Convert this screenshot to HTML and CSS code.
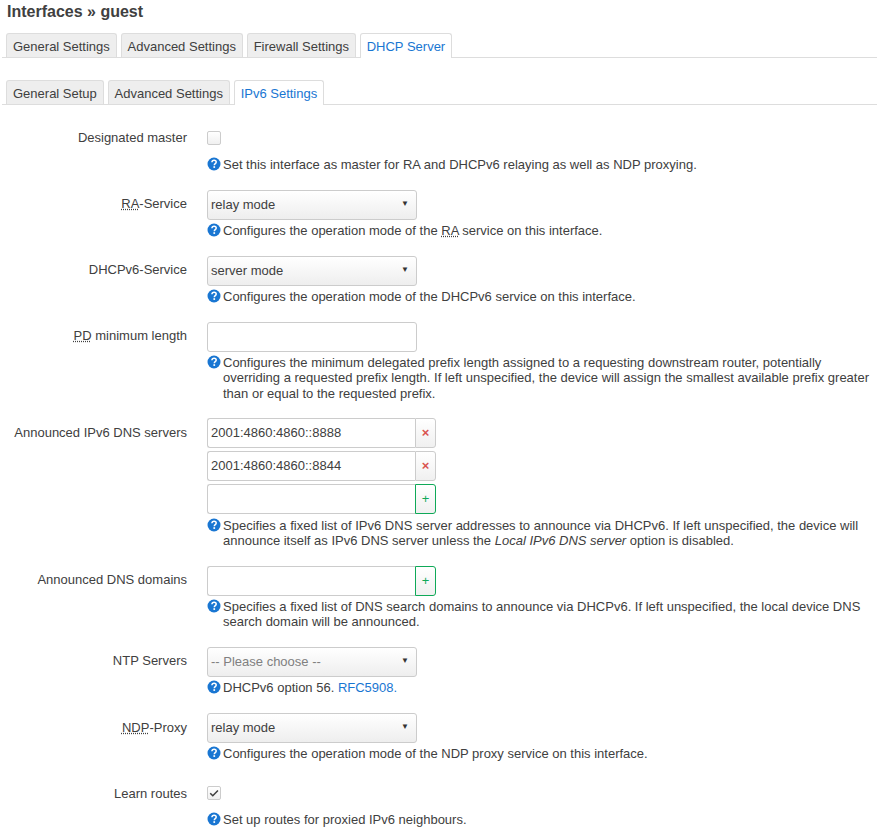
FILE: index.html
```html
<!DOCTYPE html>
<html lang="en">
<head>
  <meta charset="UTF-8">
  <title>Interfaces - guest</title>
  <link rel="stylesheet" href="styles.css">
</head>
<body>
  <h2 class="page-title">Interfaces » guest</h2>

  <ul class="tabs">
    <li>General Settings</li>
    <li>Advanced Settings</li>
    <li>Firewall Settings</li>
    <li class="active">DHCP Server</li>
  </ul>

  <ul class="tabs sub-tabs">
    <li>General Setup</li>
    <li>Advanced Settings</li>
    <li class="active">IPv6 Settings</li>
  </ul>

  <div class="form">
    <div class="row row-check">
      <label class="label">Designated master</label>
      <div class="field">
        <span class="checkbox"></span>
        <p class="desc"><svg class="help" viewBox="0 0 14 14"><use href="#help"></use></svg>Set this interface as master for RA and DHCPv6 relaying as well as NDP proxying.</p>
      </div>
    </div>

    <div class="row">
      <label class="label"><abbr>RA</abbr>-Service</label>
      <div class="field">
        <div class="select">relay mode</div>
        <p class="desc"><svg class="help" viewBox="0 0 14 14"><use href="#help"></use></svg>Configures the operation mode of the <abbr>RA</abbr> service on this interface.</p>
      </div>
    </div>

    <div class="row">
      <label class="label">DHCPv6-Service</label>
      <div class="field">
        <div class="select">server mode</div>
        <p class="desc"><svg class="help" viewBox="0 0 14 14"><use href="#help"></use></svg>Configures the operation mode of the DHCPv6 service on this interface.</p>
      </div>
    </div>

    <div class="row">
      <label class="label"><abbr>PD</abbr> minimum length</label>
      <div class="field">
        <div class="input"></div>
        <p class="desc"><svg class="help" viewBox="0 0 14 14"><use href="#help"></use></svg>Configures the minimum delegated prefix length assigned to a requesting downstream router, potentially overriding a requested prefix length. If left unspecified, the device will assign the smallest available prefix greater than or equal to the requested prefix.</p>
      </div>
    </div>

    <div class="row">
      <label class="label">Announced IPv6 DNS servers</label>
      <div class="field">
        <div class="dynlist">
          <div class="dynitem"><div class="input">2001:4860:4860::8888</div><span class="btn remove">×</span></div>
          <div class="dynitem"><div class="input">2001:4860:4860::8844</div><span class="btn remove">×</span></div>
          <div class="dynitem last"><div class="input"></div><span class="btn add">+</span></div>
        </div>
        <p class="desc"><svg class="help" viewBox="0 0 14 14"><use href="#help"></use></svg>Specifies a fixed list of IPv6 DNS server addresses to announce via DHCPv6. If left unspecified, the device will announce itself as IPv6 DNS server unless the <em>Local IPv6 DNS server</em> option is disabled.</p>
      </div>
    </div>

    <div class="row">
      <label class="label">Announced DNS domains</label>
      <div class="field">
        <div class="dynitem last"><div class="input"></div><span class="btn add">+</span></div>
        <p class="desc"><svg class="help" viewBox="0 0 14 14"><use href="#help"></use></svg>Specifies a fixed list of DNS search domains to announce via DHCPv6. If left unspecified, the local device DNS search domain will be announced.</p>
      </div>
    </div>

    <div class="row">
      <label class="label">NTP Servers</label>
      <div class="field">
        <div class="select placeholder">-- Please choose --</div>
        <p class="desc"><svg class="help" viewBox="0 0 14 14"><use href="#help"></use></svg>DHCPv6 option 56. <a href="#">RFC5908.</a></p>
      </div>
    </div>

    <div class="row">
      <label class="label"><abbr>NDP</abbr>-Proxy</label>
      <div class="field">
        <div class="select">relay mode</div>
        <p class="desc"><svg class="help" viewBox="0 0 14 14"><use href="#help"></use></svg>Configures the operation mode of the NDP proxy service on this interface.</p>
      </div>
    </div>

    <div class="row row-check">
      <label class="label">Learn routes</label>
      <div class="field">
        <span class="checkbox checked"><svg viewBox="0 0 14 14"><path d="M2.6 7.2l3 3L11.6 4" fill="none" stroke="#404040" stroke-width="1.8"/></svg></span>
        <p class="desc"><svg class="help" viewBox="0 0 14 14"><use href="#help"></use></svg>Set up routes for proxied IPv6 neighbours.</p>
      </div>
    </div>
  </div>

  <!-- shared help icon -->
  <svg class="defs" width="0" height="0">
    <symbol id="help" viewBox="0 0 14 14">
      <circle cx="7" cy="7" r="6.5" fill="#1976d2"/>
      <path d="M4.9 5.3C5 4 5.9 3.3 7.1 3.3c1.2 0 2.1.7 2.1 1.8 0 1.6-1.9 1.6-1.9 3.1" fill="none" stroke="#fff" stroke-width="1.5"/>
      <rect x="6.4" y="9.2" width="1.7" height="1.7" fill="#fff"/>
    </symbol>
  </svg>
</body>
</html>
```

FILE: styles.css
```css
body {
  margin: 0;
  padding: 0 0 0 2px;
  font-family: "Liberation Sans", Arial, sans-serif;
  font-size: 13px;
  line-height: 15.2px;
  color: #404040;
  background: #fff;
}
.page-title {
  margin: 0;
  padding: 3px 0 0 5px;
  height: 33px;
  box-sizing: border-box;
  font-size: 16px;
  line-height: 17px;
  font-weight: bold;
}
.tabs {
  display: flex;
  gap: 4px;
  margin: 0;
  padding: 0 0 0 4px;
  list-style: none;
  height: 25px;
  box-sizing: border-box;
  border-bottom: 1px solid #ddd;
}
.sub-tabs {
  margin-top: 22px;
}
.tabs li {
  height: 24px;
  box-sizing: border-box;
  padding: 5px 5.7px 0 6px;
  background: #eee;
  border: 1px solid #ddd;
  border-bottom: none;
  border-radius: 3px 3px 0 0;
}
.tabs li.active {
  height: 25px;
  background: #fff;
  color: #1976d2;
}
.form {
  padding-top: 18.95px;
}
.row {
  display: grid;
  grid-template-columns: 185px 1fr;
  column-gap: 20px;
  padding-bottom: 17.5px;
}
.label {
  text-align: right;
  padding-top: 6.5px;
}
.field {
  min-width: 0;
}
abbr {
  text-decoration: underline dotted;
}
.checkbox {
  display: block;
  box-sizing: border-box;
  width: 14px;
  height: 14px;
  margin: 7px 0 0 0;
  border: 1px solid #ccc;
  border-radius: 2px;
  background: linear-gradient(#fff, #f0f0f0);
}
.checkbox svg {
  display: block;
  width: 12px;
  height: 12px;
}
.row-check .desc {
  margin-top: 12px;
}
.select, .input {
  box-sizing: border-box;
  width: 210px;
  height: 30px;
  padding: 0 3px;
  line-height: 28px;
  border: 1px solid #ccc;
  border-radius: 3px;
}
.select {
  position: relative;
  background: linear-gradient(#fff, #eee);
}
.select::after {
  content: "▼";
  position: absolute;
  right: 7px;
  top: -1px;
  font-size: 8px;
  color: #333;
}
.select.placeholder {
  color: #808080;
}
.dynitem {
  display: flex;
  margin-bottom: 3px;
}
.dynitem.last {
  margin-bottom: 0;
}
.dynitem .input {
  width: 208px;
  border-radius: 3px 0 0 3px;
  border-right: none;
}
.btn {
  box-sizing: border-box;
  width: 21px;
  height: 30px;
  line-height: 28px;
  text-align: center;
  border: 1px solid #ccc;
  border-radius: 0 3px 3px 0;
  background: linear-gradient(#fff, #f0f0f0);
  font-weight: bold;
}
.btn.remove {
  color: #d9534f;
}
.btn.add {
  color: #0fa958;
  border-color: #0fa958;
  font-weight: normal;
}
.desc {
  position: relative;
  margin: 3.4px 0 0;
  padding-left: 16px;
}
.help {
  position: absolute;
  left: 0;
  top: 0;
  width: 14px;
  height: 14px;
}
.desc a {
  color: #1976d2;
  text-decoration: none;
}
.defs {
  position: absolute;
}
```
